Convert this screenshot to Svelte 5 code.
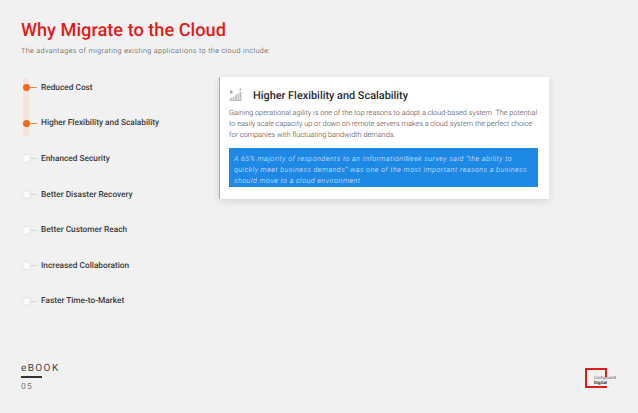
<script>
  const items = [
    { label: 'Reduced Cost', active: true },
    { label: 'Higher Flexibility and Scalability', active: true },
    { label: 'Enhanced Security', active: false },
    { label: 'Better Disaster Recovery', active: false },
    { label: 'Better Customer Reach', active: false },
    { label: 'Increased Collaboration', active: false },
    { label: 'Faster Time-to-Market', active: false }
  ];
</script>

<div class="page">
  <header class="head">
    <h1>Why Migrate to the Cloud</h1>
    <p class="sub">The advantages of migrating existing applications to the cloud include:</p>
  </header>

  <main class="main">
    <ul class="list">
      <span class="track"></span>
      {#each items as item}
        <li class="row" class:active={item.active}>
          <span class="dot"></span>
          <span class="line"></span>
          <span class="label">{item.label}</span>
        </li>
      {/each}
    </ul>

    <section class="card">
      <div class="card-head">
        <svg class="icon" width="14" height="14" viewBox="0 0 14 14" aria-hidden="true">
          <path d="M0.500 13V11.500H12.500V13Z" fill="#bcbcbc" />
          <path d="M1 11.500V10L3 9.500V11.500ZM3.500 11.500V9L5.500 8.500V11.500ZM6 11.500V7.500L8 6.500V11.500ZM8.500 11.500V6L10 5V11.500ZM10.500 11.500V4H12.500V11.500Z" fill="#c2c2c2" />
          <path d="M1 2.500H3.500V5.500H1Z" fill="#a6a6a6" />
          <path d="M10.500 0.500H12V2.500H10.500Z" fill="#a6a6a6" />
        </svg>
        <h2>Higher Flexibility and Scalability</h2>
      </div>
      <p class="body">Gaining operational agility is one of the top reasons to adopt a cloud-based system. The potential<br />to easily scale capacity up or down on remote servers makes a cloud system the perfect choice<br />for companies with fluctuating bandwidth demands.</p>
      <blockquote class="quote">A 65% majority of respondents to an InformationWeek survey said “the ability to<br />quickly meet business demands” was one of the most important reasons a business<br />should move to a cloud environment</blockquote>
    </section>
  </main>

  <footer class="foot">
    <div class="ebook">
      <div class="ebook-title">eBOOK</div>
      <div class="rule"></div>
      <div class="num">05</div>
    </div>
    <div class="logo">
      <span class="logo-text">Compound<br /><b>Digital</b></span>
    </div>
  </footer>
</div>

<style>
  :global(body) {
    margin: 0;
    background: #f1f1f1;
  }
  .page {
    width: 638px;
    height: 413px;
    box-sizing: border-box;
    padding: 21px 31px 0 21px;
    display: flex;
    flex-direction: column;
    overflow: hidden;
    font-family: Roboto, "Liberation Sans", sans-serif;
    background: #f1f1f1;
    text-rendering: geometricPrecision;
  }
  h1 {
    margin: 0;
    font-size: 18.200px;
    line-height: 20px;
    font-weight: 500;
    color: #e01b1b;
  }
  .sub {
    margin: 4px 0 0;
    font-size: 7.200px;
    line-height: 12px;
    font-weight: 300;
    letter-spacing: 0.4px;
    color: #444;
  }
  .main {
    display: flex;
    align-items: flex-start;
    margin-top: 20px;
    height: 285px;
  }
  .list {
    position: relative;
    list-style: none;
    margin: 0;
    padding: 0;
    width: 198px;
    flex: none;
  }
  .track {
    position: absolute;
    left: 2px;
    top: 1px;
    width: 6px;
    height: 58px;
    background: #f5e4da;
  }
  .row {
    position: relative;
    display: flex;
    align-items: center;
    height: 35.6px;
    top: -7px;
  }
  .dot {
    width: 7px;
    height: 7px;
    margin-left: 1.500px;
    border-radius: 50%;
    background: #fbfbfb;
    box-shadow: 0 0 3px #d4d4d4;
    flex: none;
  }
  .line {
    width: 7px;
    height: 1px;
    background: #d8d8d8;
    flex: none;
  }
  .active .dot {
    background: #f2691c;
    box-shadow: none;
  }
  .active .line {
    background: #f0854a;
  }
  .label {
    margin-left: 4.500px;
    font-size: 8.300px;
    font-weight: 500;
    color: #3a3a3a;
    white-space: nowrap;
  }
  .card {
    width: 330px;
    height: 122px;
    box-sizing: border-box;
    padding: 9px 11px 0 9px;
    background: #fff;
    border-left: 1px solid #ec9a62;
    box-shadow: 0 2px 8px rgba(0, 0, 0, 0.12);
    flex: none;
  }
  .card-head {
    display: flex;
    align-items: center;
    height: 18px;
  }
  .icon {
    flex: none;
  }
  h2 {
    margin: 0 0 0 10px;
    font-size: 10.900px;
    font-weight: 500;
    color: #2b2b2b;
    white-space: nowrap;
  }
  .body {
    margin: 2.500px 0 0;
    font-size: 7.300px;
    line-height: 11px;
    font-weight: 300;
    color: #444;
    white-space: nowrap;
  }
  .quote {
    margin: 8.500px 0 0;
    height: 39px;
    box-sizing: border-box;
    padding: 4.500px 5px 0;
    background: #1e88e5;
    color: #e0eefb;
    font-size: 7.100px;
    line-height: 11.300px;
    font-weight: 300;
    font-style: italic;
    letter-spacing: 0.5px;
    white-space: nowrap;
  }
  .foot {
    display: flex;
    justify-content: space-between;
    align-items: flex-end;
  }
  .ebook-title {
    font-size: 10px;
    line-height: 13px;
    letter-spacing: 1.400px;
    color: #444;
  }
  .rule {
    width: 21px;
    height: 2px;
    margin-top: 1px;
    background: #333;
  }
  .num {
    margin-top: 4px;
    font-size: 8.500px;
    line-height: 11px;
    letter-spacing: 1.100px;
    color: #777;
  }
  .logo {
    position: relative;
    width: 22px;
    height: 20px;
    box-sizing: border-box;
    margin: 0 0 5px 0;
    border: 2px solid #e01b1b;
  }
  .logo-text {
    position: absolute;
    left: 6px;
    top: 7px;
    padding: 0 0 0 1px;
    background: #f1f1f1;
    font-size: 4.500px;
    line-height: 4.500px;
    color: #555;
    white-space: nowrap;
  }
  .logo-text b {
    color: #333;
  }
</style>
